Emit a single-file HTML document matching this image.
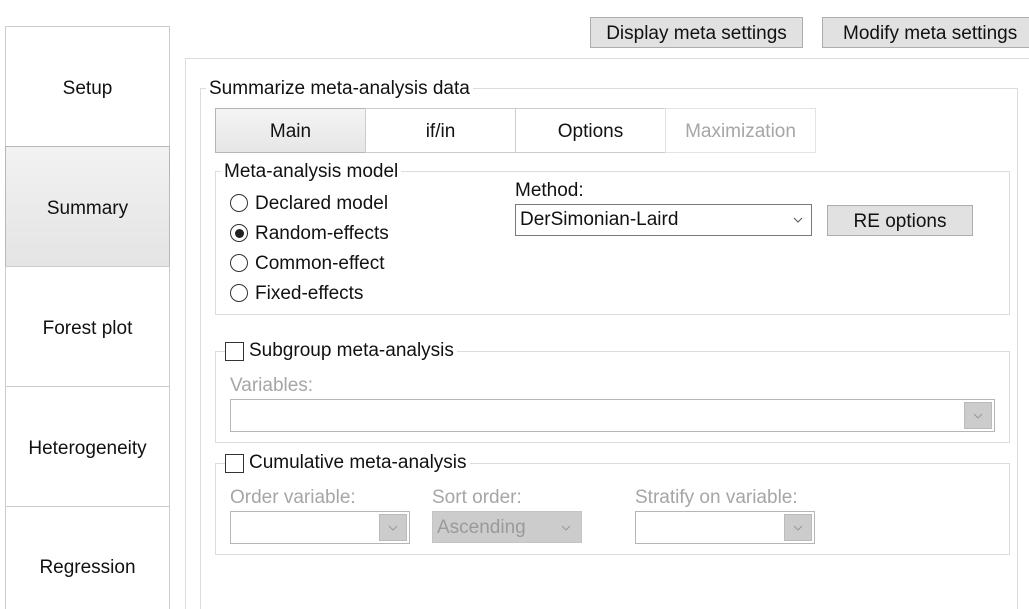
<!DOCTYPE html>
<html style="height:609px;overflow:hidden"><head><style>
body{margin:0;width:1029px;height:609px;background:#fff;font-family:"Liberation Sans","Noto Sans CJK SC",sans-serif;font-size:19px;color:#111;position:relative;overflow:hidden}
.a{position:absolute;box-sizing:border-box}
.nav{left:5px;width:165px;height:121px;border:1px solid #ccc;display:flex;align-items:center;justify-content:center;background:#fff;padding-top:5px}
.btn{background:#e1e1e1;border:1px solid #adadad;display:flex;align-items:center;justify-content:center;padding-top:2px}
.tab{top:108px;height:45px;width:151px;border:1px solid #ccc;display:flex;align-items:center;justify-content:center;background:#fff;padding-top:3px}
.box{border:1px solid #dcdcdc}
.lg{background:#fff;padding:0 3px;line-height:20px}
.radio{width:18px;height:18px;border:1px solid #333;border-radius:50%;left:230px}
.cb{width:19px;height:19px;border:1px solid #333;left:225px;background:#fff}
.dis{color:#a6a6a6}
.combo{border:1px solid #b5b5b5;background:#fff}
.arr{position:absolute;right:2px;top:2px;bottom:2px;width:26px;background:#ccc;border:1px solid #bbb;display:flex;align-items:center;justify-content:center}
</style></head><body>
<div class="a nav" style="top:26px">Setup</div>
<div class="a nav" style="top:146px;background:linear-gradient(#f2f2f2,#e4e4e4);border-color:#b8b8b8">Summary</div>
<div class="a nav" style="top:266px">Forest plot</div>
<div class="a nav" style="top:386px">Heterogeneity</div>
<div class="a nav" style="top:506px;height:103px;border-bottom:none;padding-top:20px">Regression</div>

<div class="a btn" style="left:590px;top:17px;width:213px;height:31px">Display meta settings</div>
<div class="a btn" style="left:822px;top:17px;width:207px;height:31px;border-right:none;justify-content:flex-start;padding-left:20px">Modify meta settings</div>

<div class="a" style="left:185px;top:58px;width:844px;height:551px;border:1px solid #ddd;border-right:none;border-bottom:none"></div>
<div class="a box" style="left:200px;top:88px;width:818px;height:521px;border-bottom:none"></div>
<div class="a lg" style="left:206px;top:79px">Summarize meta-analysis data</div>

<div class="a tab" style="left:215px;background:linear-gradient(#f4f4f4,#e6e6e6);border-color:#b5b5b5">Main</div>
<div class="a tab" style="left:365px">if/in</div>
<div class="a tab" style="left:515px">Options</div>
<div class="a tab dis" style="left:665px;border-color:#e3e3e3">Maximization</div>

<div class="a box" style="left:215px;top:171px;width:795px;height:144px"></div>
<div class="a lg" style="left:221px;top:162px">Meta-analysis model</div>
<div class="a radio" style="top:194px"></div><div class="a" style="left:255px;top:193px">Declared model</div>
<div class="a radio" style="top:224px"></div><div class="a" style="left:235px;top:229px;width:9px;height:9px;border-radius:50%;background:#222"></div><div class="a" style="left:255px;top:223px">Random-effects</div>
<div class="a radio" style="top:254px"></div><div class="a" style="left:255px;top:253px">Common-effect</div>
<div class="a radio" style="top:284px"></div><div class="a" style="left:255px;top:283px">Fixed-effects</div>
<div class="a" style="left:515px;top:180px">Method:</div>
<div class="a" style="left:515px;top:204px;width:297px;height:32px;border:1px solid #7a7a7a;padding:4px 0 0 4px">DerSimonian-Laird<svg style="position:absolute;right:8px;top:12px" width="10" height="6"><path d="M1 1L5 5L9 1" fill="none" stroke="#555" stroke-width="1"/></svg></div>
<div class="a btn" style="left:827px;top:205px;width:146px;height:31px">RE options</div>

<div class="a box" style="left:215px;top:351px;width:795px;height:92px"></div>
<div class="a lg" style="left:243px;top:341px;padding-left:6px">Subgroup meta-analysis</div>
<div class="a cb" style="top:342px"></div>
<div class="a dis" style="left:230px;top:375px">Variables:</div>
<div class="a combo" style="left:230px;top:399px;width:765px;height:33px"><div class="arr"><svg width="10" height="6"><path d="M1 1L5 5L9 1" fill="none" stroke="#999"/></svg></div></div>

<div class="a box" style="left:215px;top:463px;width:795px;height:92px"></div>
<div class="a lg" style="left:243px;top:453px;padding-left:6px">Cumulative meta-analysis</div>
<div class="a cb" style="top:454px"></div>
<div class="a dis" style="left:230px;top:487px">Order variable:</div>
<div class="a dis" style="left:432px;top:487px">Sort order:</div>
<div class="a dis" style="left:635px;top:487px">Stratify on variable:</div>
<div class="a combo" style="left:230px;top:511px;width:180px;height:33px"><div class="arr"><svg width="10" height="6"><path d="M1 1L5 5L9 1" fill="none" stroke="#999"/></svg></div></div>
<div class="a dis" style="left:432px;top:511px;width:150px;height:32px;background:#ccc;border:1px solid #c4c4c4;padding:5px 0 0 4px;color:#9a9a9a">Ascending<svg style="position:absolute;right:10px;top:13px" width="10" height="6"><path d="M1 1L5 5L9 1" fill="none" stroke="#999"/></svg></div>
<div class="a combo" style="left:635px;top:511px;width:180px;height:33px"><div class="arr"><svg width="10" height="6"><path d="M1 1L5 5L9 1" fill="none" stroke="#999"/></svg></div></div>
</body></html>
